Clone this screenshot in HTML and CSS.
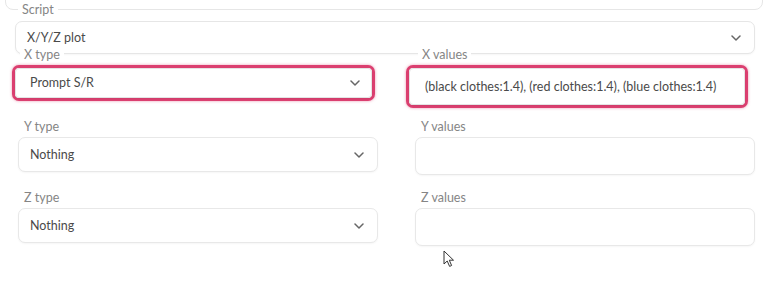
FILE: index.html
```html
<!DOCTYPE html>
<html>
<head>
<meta charset="utf-8">
<link rel="stylesheet" href="styles.css">
</head>
<body>
<div class="page">
  <div class="prev"></div>
  <div class="script-field">
    <span class="label">Script</span>
    <div class="dropdown script-box">
      <span class="value">X/Y/Z plot</span>
      <svg class="chev" width="10" height="6" viewBox="0 0 10 6"><path d="M1 1 L5 5 L9 1" fill="none" stroke="#666" stroke-width="1.5" stroke-linecap="round" stroke-linejoin="round"/></svg>
    </div>
  </div>

  <div class="row row-x">
    <div class="field">
      <span class="label">X type</span>
      <div class="hl hl-type">
        <div class="dropdown inner">
          <span class="value">Prompt S/R</span>
          <svg class="chev" width="10" height="6" viewBox="0 0 10 6"><path d="M1 1 L5 5 L9 1" fill="none" stroke="#666" stroke-width="1.5" stroke-linecap="round" stroke-linejoin="round"/></svg>
        </div>
      </div>
    </div>
    <div class="field">
      <span class="label">X values</span>
      <div class="hl hl-values">
        <div class="textbox inner">
          <span class="value">(black clothes:1.4), (red clothes:1.4), (blue clothes:1.4)</span>
        </div>
      </div>
    </div>
  </div>

  <div class="row row-y">
    <div class="field">
      <span class="label">Y type</span>
      <div class="dropdown plain">
        <span class="value">Nothing</span>
        <svg class="chev" width="10" height="6" viewBox="0 0 10 6"><path d="M1 1 L5 5 L9 1" fill="none" stroke="#666" stroke-width="1.5" stroke-linecap="round" stroke-linejoin="round"/></svg>
      </div>
    </div>
    <div class="field">
      <span class="label">Y values</span>
      <div class="textbox plain"></div>
    </div>
  </div>

  <div class="row row-z">
    <div class="field">
      <span class="label">Z type</span>
      <div class="dropdown plain">
        <span class="value">Nothing</span>
        <svg class="chev" width="10" height="6" viewBox="0 0 10 6"><path d="M1 1 L5 5 L9 1" fill="none" stroke="#666" stroke-width="1.5" stroke-linecap="round" stroke-linejoin="round"/></svg>
      </div>
    </div>
    <div class="field">
      <span class="label">Z values</span>
      <div class="textbox plain tall"></div>
    </div>
  </div>

  <svg class="cursor" width="12" height="18" viewBox="0 0 12 18"><path d="M1 1 L1 14 L4.2 11 L6.6 16.4 L8.6 15.5 L6.3 10.2 L10.5 10.2 Z" fill="#fff" stroke="#333" stroke-width="1" stroke-linejoin="round"/></svg>
</div>
</body>
</html>
```

FILE: styles.css
```css
* { box-sizing: border-box; }
html, body {
  margin: 0;
  padding: 0;
  background: #fff;
}
body {
  font-family: Lato, "Noto Sans", sans-serif;
  color: #4a4a4a;
  overflow: hidden;
  line-height: 14px;
}
.page {
  position: relative;
  display: flow-root;
  width: 768px;
  height: 282px;
}
.prev {
  height: 30px;
  margin: -20px 5px 0 5px;
  border: 1px solid #e6e6e6;
  border-radius: 8px;
}
.script-field, .field {
  display: flex;
  flex-direction: column;
  align-items: flex-start;
}
.label {
  display: block;
  background: #fff;
  font-size: 12.5px;
  line-height: 14px;
  height: 14px;
  padding: 0 4px;
  color: #858585;
  margin-left: 2px;
}
.script-field {
  margin: -7px 13px 0 15px;
}
.script-field .label {
  margin-left: 3px;
}
.dropdown, .textbox {
  display: flex;
  align-items: center;
  justify-content: space-between;
  background: #fff;
  font-size: 12.5px;
}
.script-box {
  align-self: stretch;
  margin-top: 4px;
  height: 33px;
  border: 1px solid #e6e6e6;
  border-radius: 7px;
  padding: 0 13px 0 11px;
  box-shadow: 0 1px 2px rgba(0,0,0,0.04);
}
.row {
  display: grid;
  grid-template-columns: 360px 340px;
  column-gap: 37px;
  margin-left: 18px;
  align-items: start;
  position: relative;
}
.row-x { margin-top: -6px; }
.row-y { margin-top: 12px; }
.row-z { margin-top: 16px; }
.row-x .field:last-child .label { margin-left: 3px; }
.hl {
  margin-top: 3px;
  border: 3px solid #db3f70;
  border-radius: 7px;
  box-shadow: 0 0 3px rgba(219, 63, 112, 0.55);
  background: #fff;
}
.hl-type {
  margin-left: -6px;
  width: 363px;
  height: 36px;
}
.hl-values {
  margin-left: -9px;
  width: 342px;
  height: 43px;
}
.inner {
  height: 100%;
  border: 1px solid #e4e4e4;
  border-radius: 4px;
  box-shadow: 0 1px 2px rgba(0,0,0,0.06);
}
.hl-type .inner {
  padding: 0 11px 0 14px;
}
.hl-values .inner {
  padding: 0 11px 0 15px;
}
.plain {
  align-self: stretch;
  margin-top: 3px;
  height: 35px;
  border: 1px solid #e8e8e8;
  border-radius: 7px;
  padding: 0 13px 0 11px;
  box-shadow: 0 1px 2px rgba(0,0,0,0.04);
}
.textbox.plain {
  height: 38px;
}
.value {
  white-space: nowrap;
  color: #4a4a4a;
}
.chev {
  display: block;
  flex: none;
}
.cursor {
  position: absolute;
  left: 443px;
  top: 250px;
}
```
